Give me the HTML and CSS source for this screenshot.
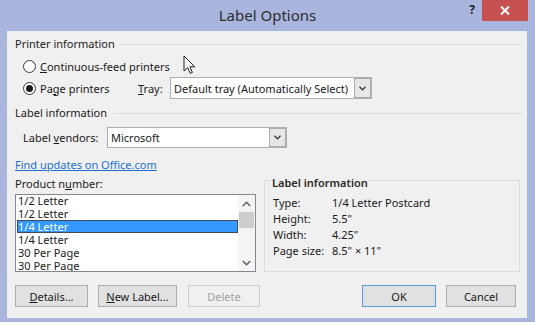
FILE: index.html
```html
<!DOCTYPE html>
<html>
<head>
<meta charset="utf-8">
<link rel="stylesheet" href="styles.css">
</head>
<body>
<div class="window">
  <div class="titlebar">
    <div></div>
    <div class="title">Label Options</div>
    <div class="controls">
      <span class="help">?</span>
      <span class="close"><svg width="10" height="9" viewBox="0 0 10 9"><path d="M1 0.5 L9 8.5 M9 0.5 L1 8.5" stroke="#fff" stroke-width="2"/></svg></span>
    </div>
  </div>
  <div class="client">
    <div class="group-head"><span>Printer information</span><i class="rule"></i></div>
    <div class="radio-row r1"><span class="radio"></span><span><u>C</u>ontinuous-feed printers</span></div>
    <div class="radio-row r2">
      <span class="radio checked"></span><span class="pp">Pa<u>g</u>e printers</span>
      <span class="tray"><u>T</u>ray:</span>
      <div class="select tray-select"><span class="val">Default tray (Automatically Select)</span><span class="dd"><svg width="7" height="5" viewBox="0 0 7 5"><path d="M0.5 0.8 L3.5 3.8 L6.5 0.8" fill="none" stroke="#3a3a3a" stroke-width="1.3"/></svg></span></div>
    </div>
    <div class="group-head gh2"><span>Label information</span><i class="rule"></i></div>
    <div class="vendor-row">
      <span class="vlbl">Label <u>v</u>endors:</span>
      <div class="select vendor-select"><span class="val">Microsoft</span><span class="dd"><svg width="7" height="5" viewBox="0 0 7 5"><path d="M0.5 0.8 L3.5 3.8 L6.5 0.8" fill="none" stroke="#3a3a3a" stroke-width="1.3"/></svg></span></div>
    </div>
    <div class="link">Find updates on Office.com</div>
    <div class="lower">
      <div class="left-col">
        <div class="caption">Product n<u>u</u>mber:</div>
        <div class="listbox">
          <div class="items">
            <div class="item">1/2 Letter</div>
            <div class="item">1/2 Letter</div>
            <div class="item sel">1/4 Letter</div>
            <div class="item">1/4 Letter</div>
            <div class="item">30 Per Page</div>
            <div class="item">30 Per Page</div>
          </div>
          <div class="scrollbar">
            <span class="arrow"><svg width="9" height="6" viewBox="0 0 9 6"><path d="M0.8 5 L4.5 1.3 L8.2 5" fill="none" stroke="#606060" stroke-width="1.5"/></svg></span>
            <span class="thumb"></span>
            <span class="track"></span>
            <span class="arrow"><svg width="9" height="6" viewBox="0 0 9 6"><path d="M0.8 1 L4.5 4.7 L8.2 1" fill="none" stroke="#606060" stroke-width="1.5"/></svg></span>
          </div>
        </div>
      </div>
      <div class="infobox">
        <div class="head">Label information</div>
        <div class="info-grid">
          <span>Type:</span><span>1/4 Letter Postcard</span>
          <span>Height:</span><span>5.5"</span>
          <span>Width:</span><span>4.25"</span>
          <span>Page size:</span><span>8.5" × 11"</span>
        </div>
      </div>
    </div>
    <div class="buttons">
      <div class="btn b-details"><span><u>D</u>etails...</span></div>
      <div class="btn b-new"><span><u>N</u>ew Label...</span></div>
      <div class="btn b-delete"><span>Delete</span></div>
      <div class="btn b-ok"><span>OK</span></div>
      <div class="btn b-cancel"><span>Cancel</span></div>
    </div>
  </div>
  <svg class="cursor" width="14" height="20" viewBox="0 0 14 20"><path d="M1 1 L1 16 L4.6 12.6 L7.2 18.4 L9.4 17.4 L6.9 11.8 L11.8 11.8 Z" fill="#f4f4f4" stroke="#222" stroke-width="1" stroke-linejoin="round"/></svg>
</div>
</body>
</html>
```

FILE: styles.css
```css
* { box-sizing: border-box; }
body {
  margin: 0;
  background: #fff;
  font-family: "Noto Sans", "Open Sans", sans-serif;
  font-size: 11px;
  color: #1a1a1a;
}
u { text-underline-offset: 1px; }
.window {
  width: 535px;
  height: 322px;
  background: #aab5de;
  padding: 0 8px 4px 7px;
  display: flex;
  flex-direction: column;
  position: relative;
}
.titlebar {
  height: 31px;
  display: grid;
  grid-template-columns: 1fr auto 1fr;
  margin: 0 -8px 0 -7px;
}
.title {
  font-size: 15px;
  line-height: 31px;
  color: #2d2d2d;
}
.controls {
  display: flex;
  justify-content: flex-end;
  align-items: flex-start;
  padding-right: 7px;
}
.help {
  font-weight: 700;
  font-size: 12px;
  line-height: 14px;
  margin-top: 3px;
  margin-right: 7px;
  color: #222;
}
.close {
  width: 46px;
  height: 21px;
  background: #c75050;
  display: flex;
  align-items: center;
  justify-content: center;
}
.client {
  flex: 1;
  background: #f0f0f0;
  padding: 5px 7px 0 8px;
  display: flex;
  flex-direction: column;
}
.group-head {
  display: flex;
  align-items: center;
  height: 16px;
  line-height: 16px;
}
.group-head .rule {
  flex: 1;
  height: 1px;
  background: #dcdcdc;
  margin-left: 6px;
  margin-right: -2px;
}
.gh2 { margin-top: 6px; }
.radio-row {
  display: flex;
  align-items: center;
  padding-left: 8px;
}
.r1 { height: 20px; margin-top: 4px; }
.r2 { height: 22px; margin-top: 1px; }
.radio {
  width: 13px;
  height: 13px;
  border-radius: 50%;
  border: 1px solid #3a3a3a;
  background: #fff;
  margin-right: 4px;
  display: flex;
  align-items: center;
  justify-content: center;
}
.radio.checked::after {
  content: "";
  width: 7px;
  height: 7px;
  border-radius: 50%;
  background: #1a1a1a;
}
.pp { width: 98px; }
.tray { width: 32px; }
.select {
  border: 1px solid #abadb3;
  background: #fff;
  display: flex;
  align-items: center;
}
.select .val { flex: 1; padding-left: 3px; }
.select .dd {
  width: 17px;
  height: 100%;
  border: 1px solid #acacac;
  background: #e6e6e6;
  display: flex;
  align-items: center;
  justify-content: center;
}
.tray-select { width: 202px; height: 22px; }
.vendor-row {
  display: flex;
  align-items: center;
  height: 21px;
  margin-top: 6px;
  padding-left: 8px;
}
.vlbl { width: 84px; }
.vendor-select { width: 180px; height: 21px; }
.link {
  margin-top: 9px;
  height: 16px;
  line-height: 16px;
  color: #1c6fd0;
  text-decoration: underline;
}
.lower {
  display: flex;
  margin-top: 3px;
  gap: 8px;
}
.left-col { width: 241px; }
.caption { height: 16px; line-height: 16px; }
.listbox {
  margin-top: 2px;
  height: 78px;
  border: 1px solid #828790;
  background: #fff;
  display: flex;
  overflow: hidden;
}
.items { flex: 1; margin-top: -1px; }
.item {
  height: 13px;
  line-height: 13px;
  padding-left: 2px;
}
.item.sel {
  background: #3399ff;
  color: #fff;
  outline: 1px solid #3d4b5c;
  outline-offset: -1px;
  margin-left: 1px;
  padding-left: 1px;
}
.scrollbar {
  width: 17px;
  background: #f4f4f4;
  display: flex;
  flex-direction: column;
  align-items: center;
}
.scrollbar .arrow {
  height: 17px;
  display: flex;
  align-items: center;
  justify-content: center;
}
.scrollbar .thumb {
  width: 15px;
  height: 16px;
  background: #cdcdcd;
}
.scrollbar .track { flex: 1; }
.infobox {
  width: 256px;
  height: 92px;
  margin-top: 4px;
  border: 1px solid #dcdcdc;
  padding-left: 8px;
}
.infobox .head {
  width: fit-content;
  margin-top: -6px;
  margin-left: -2px;
  padding: 0 1px;
  font-weight: 600;
  background: #f0f0f0;
  height: 16px;
  line-height: 16px;
  color: #2a2a2a;
}
.info-grid {
  display: grid;
  grid-template-columns: 59px 1fr;
  grid-auto-rows: 16px;
  line-height: 16px;
  margin-top: 4px;
}
.buttons {
  display: flex;
  margin-top: 13px;
  margin-right: 4px;
}
.btn {
  height: 22px;
  border: 1px solid #adadad;
  background: #e1e1e1;
  display: flex;
  align-items: center;
  justify-content: center;
}
.b-details { width: 73px; }
.b-new { width: 79px; margin-left: 10px; }
.b-delete {
  width: 72px;
  margin-left: 11px;
  color: #a3a3a3;
  border-color: #cdcdcd;
  background: #f0f0f0;
}
.b-ok { width: 74px; margin-left: auto; border-color: #5b9bd8; }
.b-cancel { width: 70px; margin-left: 10px; }
.cursor {
  position: absolute;
  left: 183px;
  top: 55px;
}
```
